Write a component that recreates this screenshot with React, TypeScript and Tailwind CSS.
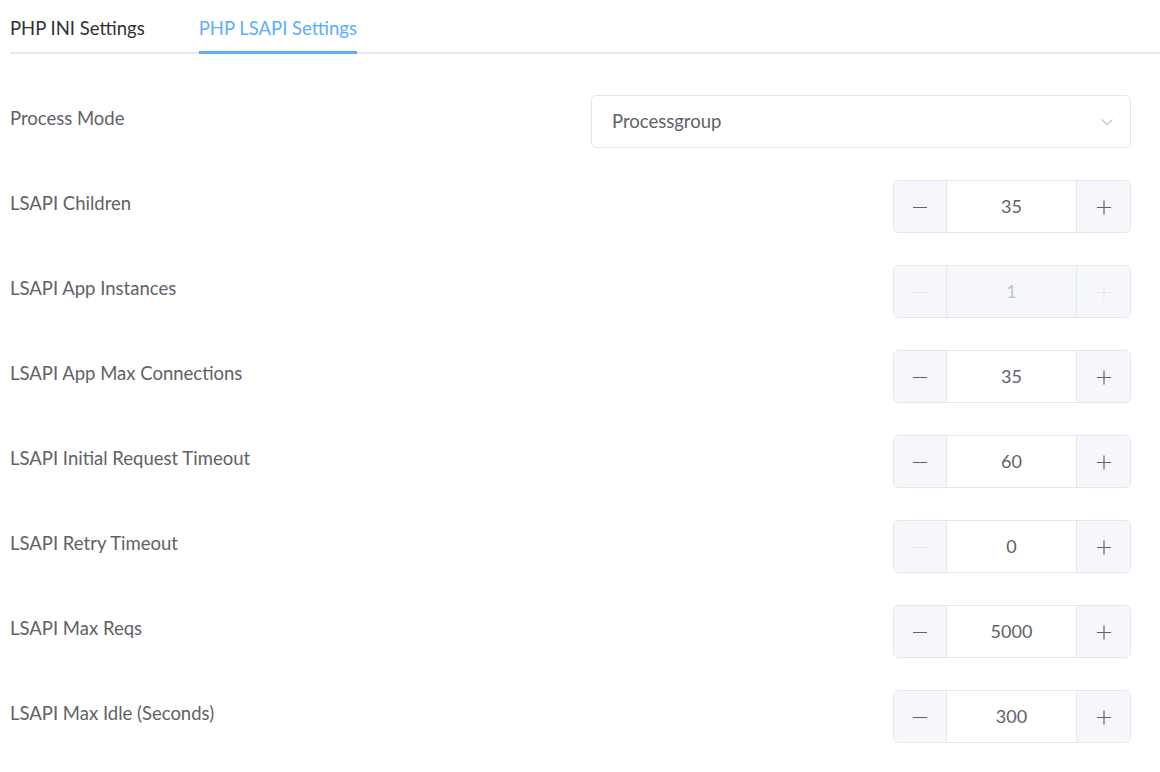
import { useState } from 'react';

type Row = {
  label: string;
  value: number;
  disabled?: boolean;
  minDisabled?: boolean;
};

const rows: Row[] = [
  { label: 'LSAPI Children', value: 35 },
  { label: 'LSAPI App Instances', value: 1, disabled: true },
  { label: 'LSAPI App Max Connections', value: 35 },
  { label: 'LSAPI Initial Request Timeout', value: 60 },
  { label: 'LSAPI Retry Timeout', value: 0, minDisabled: true },
  { label: 'LSAPI Max Reqs', value: 5000 },
  { label: 'LSAPI Max Idle (Seconds)', value: 300 },
];

function MinusIcon({ className }: { className: string }) {
  return (
    <svg width="16" height="16" viewBox="0 0 16 16" className={className}>
      <path d="M1 8.5h14" stroke="currentColor" strokeWidth="1.2" />
    </svg>
  );
}

function PlusIcon({ className }: { className: string }) {
  return (
    <svg width="16" height="16" viewBox="0 0 16 16" className={className}>
      <path d="M1 8.5h14M8 1.5v14" stroke="currentColor" strokeWidth="1.2" />
    </svg>
  );
}

function Stepper({ row }: { row: Row }) {
  const [value, setValue] = useState(row.value);
  const off = row.disabled;
  const minOff = off || row.minDisabled;
  return (
    <div
      className={`flex h-[53px] w-[238px] overflow-hidden rounded-[5px] border border-[#e4e7ed] ${
        off ? 'bg-[#f5f7fa]' : 'bg-white'
      }`}
    >
      <button
        disabled={minOff}
        onClick={() => setValue((v) => Math.max(0, v - 1))}
        className="flex w-[53px] items-center justify-center border-r border-[#e4e7ed] bg-[#f5f7fa]"
      >
        <MinusIcon className={minOff ? 'text-[#e4e7ed]' : 'text-[#606266]'} />
      </button>
      <div
        className={`flex flex-1 items-center justify-center text-[18px] ${
          off ? 'text-[#c0c4cc]' : 'text-[#606266]'
        }`}
      >
        {value}
      </div>
      <button
        disabled={off}
        onClick={() => setValue((v) => v + 1)}
        className="flex w-[54px] items-center justify-center border-l border-[#e4e7ed] bg-[#f5f7fa]"
      >
        <PlusIcon className={off ? 'text-[#e4e7ed]' : 'text-[#606266]'} />
      </button>
    </div>
  );
}

export default function App() {
  const [tab, setTab] = useState(1);
  const tabs = ['PHP INI Settings', 'PHP LSAPI Settings'];

  return (
    <div className="min-h-[772px] bg-white pl-[10px] font-['Lato',sans-serif]">
      <div className="flex h-[54px] gap-[54px] border-b-2 border-[#e4e7ed]">
        {tabs.map((t, i) => (
          <button
            key={t}
            onClick={() => setTab(i)}
            className={`-mb-[2px] flex items-start border-b-[3px] pt-[15px] text-[18.5px] leading-[26px] ${
              tab === i
                ? 'border-[#5cadff] text-[#5cadff]'
                : 'border-transparent text-[#303133]'
            }`}
          >
            {t}
          </button>
        ))}
      </div>

      <div className="flex flex-col gap-[32px] pr-[29px] pt-[41px]">
        <div className="flex items-start">
          <div className="flex-1 pt-[12px] text-[18.5px] leading-[22px] text-[#606266]">
            Process Mode
          </div>
          <div className="flex h-[53px] w-[540px] items-center justify-between rounded-[5px] border border-[#e4e7ed] pl-[20px] pr-[16px] text-[18.5px] text-[#606266]">
            <span>Processgroup</span>
            <svg width="14" height="14" viewBox="0 0 14 14" className="text-[#c0c4cc]">
              <path d="M1.5 4.5l5.5 5 5.5-5" fill="none" stroke="currentColor" strokeWidth="1.1" />
            </svg>
          </div>
        </div>

        {rows.map((r) => (
          <div key={r.label} className="flex items-start">
            <div className="flex-1 pt-[12px] text-[18.5px] leading-[22px] text-[#606266]">
              {r.label}
            </div>
            <Stepper row={r} />
          </div>
        ))}
      </div>
    </div>
  );
}
